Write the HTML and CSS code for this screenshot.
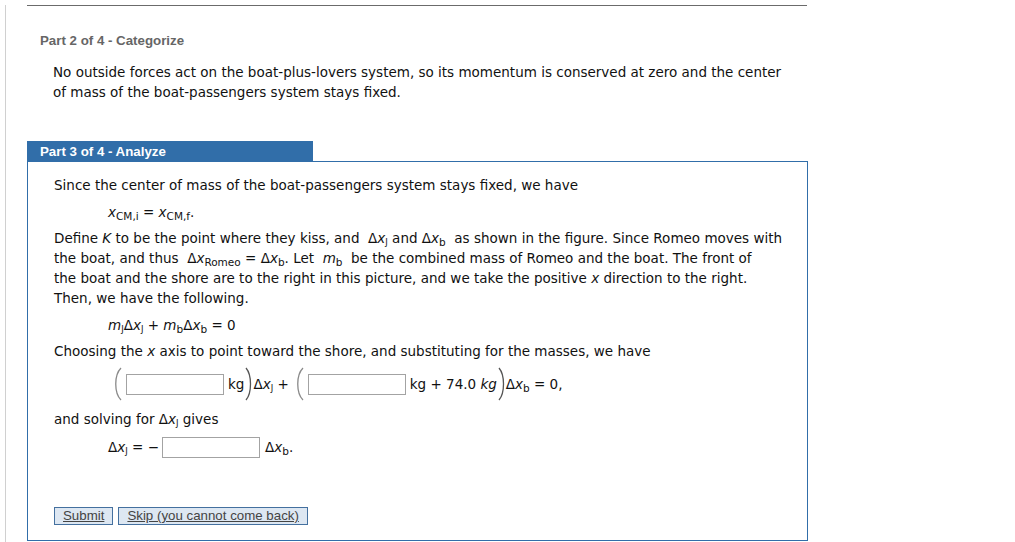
FILE: index.html
```html
<html>
<head>
<title>Part 3 of 4 - Analyze</title>
<meta name="viewport" content="width=device-width">
<link rel="stylesheet" href="styles.css">
</head>
<body>
<div class="page">
  <div class="rule"></div>

  <div class="part">
    <h3 class="part-title">Part 2 of 4 - Categorize</h3>
    <p class="part-text">No outside forces act on the boat-plus-lovers system, so its momentum is conserved at zero and the center<br>of mass of the boat-passengers system stays fixed.</p>
  </div>

  <div class="current">
    <div class="current-tab">Part 3 of 4 - Analyze</div>
    <div class="current-body">
      <p class="line">Since the center of mass of the boat-passengers system stays fixed, we have</p>
      <p class="eq eq-cm"><i>x</i><sub>CM,i</sub> = <i>x</i><sub>CM,f</sub>.</p>
      <p class="line para">Define <i>K</i> to be the point where they kiss, and &nbsp;&Delta;<i>x</i><sub class="j">J</sub> and &Delta;<i>x</i><sub>b</sub>&nbsp; as shown in the figure. Since Romeo moves with<br>the boat, and thus &nbsp;&Delta;<i>x</i><sub>Romeo</sub> = &Delta;<i>x</i><sub>b</sub>. Let &nbsp;<i>m</i><sub>b</sub>&nbsp; be the combined mass of Romeo and the boat. The front of<br>the boat and the shore are to the right in this picture, and we take the positive <i>x</i> direction to the right.<br>Then, we have the following.</p>
      <p class="eq eq-sum"><i>m</i><sub class="j">J</sub>&Delta;<i>x</i><sub class="j">J</sub> + <i>m</i><sub>b</sub>&Delta;<i>x</i><sub>b</sub> = 0</p>
      <p class="line">Choosing the <i>x</i> axis to point toward the shore, and substituting for the masses, we have</p>
      <div class="eq-row">
        <svg class="paren" width="10" height="34" viewBox="0 0 10 34"><path d="M8 1 C1 8 1 26 8 33" fill="none" stroke="#8a8a8a" stroke-width="1.3"/></svg>
        <input class="answer" type="text">
        <span class="unit">kg</span>
        <svg class="paren" width="8" height="34" viewBox="0 0 8 34"><path d="M1 1 C7 8 7 26 1 33" fill="none" stroke="#555" stroke-width="1.3"/></svg>
        <span>&Delta;<i>x</i><sub class="j">J</sub> +</span>
        <svg class="paren paren-gap" width="10" height="34" viewBox="0 0 10 34"><path d="M8 1 C1 8 1 26 8 33" fill="none" stroke="#8a8a8a" stroke-width="1.3"/></svg>
        <input class="answer" type="text">
        <span class="unit">kg + 74.0 <i>kg</i></span>
        <svg class="paren" width="8" height="34" viewBox="0 0 8 34"><path d="M1 1 C7 8 7 26 1 33" fill="none" stroke="#555" stroke-width="1.3"/></svg>
        <span>&Delta;<i>x</i><sub>b</sub> = 0,</span>
      </div>
      <p class="line solve">and solving for &Delta;<i>x</i><sub class="j">J</sub> gives</p>
      <div class="eq-row eq-final">
        <span>&Delta;<i>x</i><sub class="j">J</sub> = &minus;</span>
        <input class="answer" type="text">
        <span class="unit">&Delta;<i>x</i><sub>b</sub>.</span>
      </div>
      <div class="buttons">
        <button class="btn" type="button">Submit</button>
        <button class="btn" type="button">Skip (you cannot come back)</button>
      </div>
    </div>
  </div>
</div>
</body>
</html>
```

FILE: styles.css
```css
body {
  margin: 0;
  background: #fff;
  font-family: "DejaVu Sans", Verdana, sans-serif;
  font-size: 13.5px;
  color: #111;
}

.page {
  margin-left: 5px;
  padding-left: 21px;
  border-left: 1px solid #d0d0d0;
  min-height: 542px;
  box-sizing: border-box;
  width: 802px;
}

.rule {
  margin-top: 5px;
  border-top: 1px solid #6b6b6b;
  width: 780px;
}

.part {
  padding-left: 13px;
}

.part-title {
  margin: 27px 0 0 0;
  font-family: "Liberation Sans", Arial, sans-serif;
  font-size: 13.3px;
  line-height: 16px;
  font-weight: bold;
  color: #666;
}

.part-text {
  margin: 13px 0 0 13px;
  line-height: 20px;
  width: 760px;
}

.current {
  margin-top: 39px;
  width: 781px;
}

.current-tab {
  width: 273px;
  height: 20px;
  padding-left: 13px;
  background: #316ea9;
  color: #fff;
  font-family: "Liberation Sans", Arial, sans-serif;
  font-size: 13.3px;
  font-weight: bold;
  line-height: 21px;
}

.current-body {
  border: 1px solid #316ea9;
  padding: 13px 20px 14px 26px;
  box-sizing: border-box;
  height: 380px;
}

.line {
  margin: 0;
  line-height: 20px;
}

.para {
  width: 740px;
}

sub {
  font-size: 10.5px;
  vertical-align: -3px;
  line-height: 0;
}

sub.j {
  font-size: 8.5px;
  vertical-align: -2px;
}

.eq {
  margin: 0;
  padding-left: 54px;
  line-height: 20px;
}

.eq-cm {
  margin: 7px 0 6px 0;
}

.eq-sum {
  margin: 7px 0 6px 0;
}

.eq-row {
  display: flex;
  align-items: center;
  margin: 6px 0 0 59px;
  height: 34px;
}

.paren {
  display: block;
}

.paren-gap {
  margin-left: 6px;
}

.answer {
  width: 98px;
  height: 21px;
  margin: 0 4px 0 3px;
  border: 1px solid #a3a3a3;
  padding: 0;
  box-sizing: border-box;
}

.unit {
  margin-right: 1px;
}

.solve {
  margin-top: 8px;
}

.eq-final {
  margin: 3px 0 0 54px;
  height: 30px;
}

.eq-final .answer {
  margin: 0 5px 0 3px;
}

.buttons {
  display: flex;
  gap: 5px;
  margin-top: 45px;
}

.btn {
  font-family: "Liberation Sans", Arial, sans-serif;
  font-size: 13.3px;
  color: #444;
  text-decoration: underline;
  background: #dde7f2;
  border: 1px solid #44709f;
  height: 18px;
  padding: 0 8px;
  line-height: 16px;
}
```
